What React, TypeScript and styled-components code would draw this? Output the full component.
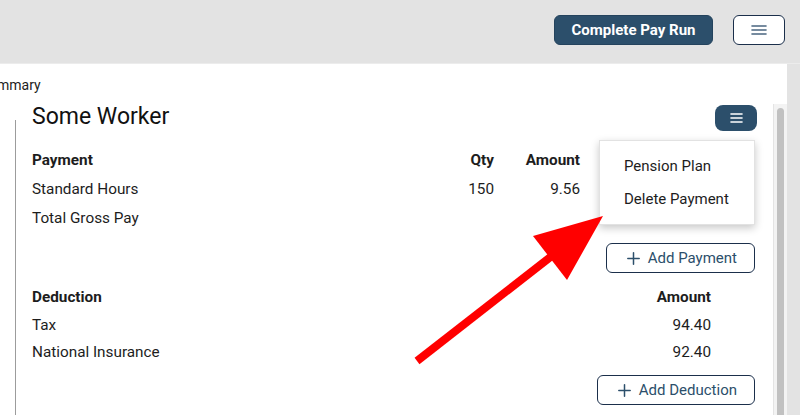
import React from "react";
import styled, { createGlobalStyle } from "styled-components";

const Global = createGlobalStyle`
  html, body { margin: 0; padding: 0; overflow: hidden; background: #e3e3e3; }
  body { font-family: Roboto, "Liberation Sans", Arial, sans-serif; color: #1d1d1d; }
  * { box-sizing: border-box; }
`;

const Page = styled.div`
  position: relative;
  width: 800px;
  height: 415px;
  overflow: hidden;
  display: flex;
  flex-direction: column;
  background: #e3e3e3;
`;

const TopBar = styled.header`
  height: 64px;
  flex: none;
  display: flex;
  align-items: flex-start;
  justify-content: flex-end;
  gap: 20px;
  padding: 15px 15px 0 0;
  border-bottom: 1px solid #ececec;
`;

const PrimaryButton = styled.button`
  height: 30px;
  width: 159px;
  padding: 0;
  border: 1px solid #24435d;
  border-radius: 6px;
  background: #2c4f6b;
  color: #fff;
  font-family: inherit;
  font-size: 15px;
  font-weight: 700;
  white-space: nowrap;
  display: flex;
  align-items: center;
  justify-content: center;
`;

const OutlineButton = styled.button<{ $w?: number }>`
  height: 30px;
  width: ${(p) => (p.$w ? `${p.$w}px` : "auto")};
  padding: ${(p) => (p.$w ? "0" : "0 17px 0 20px")};
  border: 1.5px solid #1b2f4b;
  border-radius: 6px;
  background: #fff;
  color: #2c4f6b;
  font-family: inherit;
  font-size: 15px;
  white-space: nowrap;
  display: flex;
  align-items: center;
  justify-content: center;
  gap: 8px;
`;

const IconButton = styled.button`
  width: 42px;
  height: 26px;
  border: none;
  border-radius: 8px;
  background: #2c4f6b;
  display: flex;
  align-items: center;
  justify-content: center;
  padding: 0;
`;

const Body = styled.div`
  flex: 1;
  min-height: 0;
  display: flex;
`;

const Panel = styled.main`
  flex: 1;
  margin-right: 13px;
  background: #fff;
  display: flex;
  flex-direction: column;
  min-height: 0;
`;

const Summary = styled.div`
  height: 40px;
  flex: none;
  display: flex;
  align-items: center;
  margin-left: -19px;
  padding-top: 1px;
  font-size: 14px;
  color: #1d1d1d;
`;

const ScrollArea = styled.div`
  flex: 1;
  min-height: 0;
  display: flex;
`;

const ScrollView = styled.div`
  flex: 1;
  min-width: 0;
  overflow: hidden;
`;

const ScrollTrack = styled.div`
  flex: none;
  width: 14px;
  background: #f3f3f3;
  border-left: 1px solid #e4e4e4;
  display: flex;
  padding: 4px 3px 0 3px;
`;

const ScrollThumb = styled.div`
  flex: 1;
  height: 360px;
  border-radius: 4px;
  background: #c1c1c1;
`;

const WorkerRow = styled.div`
  display: flex;
  min-height: 420px;
`;

const Rail = styled.div`
  flex: none;
  width: 1px;
  margin: 16px 0 0 15px;
  background: #9c9c9c;
`;

const Content = styled.section`
  position: relative;
  flex: 1;
  margin: 0 16px 0 16px;
  display: flex;
  flex-direction: column;
`;

const TitleRow = styled.div`
  height: 27px;
  display: flex;
  align-items: center;
  justify-content: space-between;
`;

const Title = styled.h2`
  margin: -1px 0 0;
  font-size: 23px;
  font-weight: 400;
  color: #111;
  line-height: 26px;
`;

const Table = styled.div<{ $cols: string; $mt: number }>`
  display: grid;
  grid-template-columns: ${(p) => p.$cols};
  margin-top: ${(p) => p.$mt}px;
  font-size: 15.3px;
`;

const Cell = styled.div<{ $h: number; $bold?: boolean; $right?: boolean }>`
  height: ${(p) => p.$h}px;
  display: flex;
  align-items: center;
  justify-content: ${(p) => (p.$right ? "flex-end" : "flex-start")};
  font-weight: ${(p) => (p.$bold ? 700 : 400)};
  color: #1d1d1d;
  white-space: nowrap;
`;

const ButtonRow = styled.div<{ $mt: number }>`
  display: flex;
  justify-content: flex-end;
  margin-top: ${(p) => p.$mt}px;
  padding-right: 2px;
`;

const Menu = styled.div`
  position: absolute;
  top: 36px;
  right: 2px;
  width: 156px;
  padding: 8px 0 9px;
  background: #fff;
  border: 1px solid #e2e2e2;
  box-shadow: 0 3px 8px rgba(0, 0, 0, 0.22);
  z-index: 2;
`;

const MenuItem = styled.div`
  height: 33px;
  display: flex;
  align-items: center;
  padding-left: 24px;
  font-size: 15px;
  color: #1d1d1d;
`;

const Overlay = styled.svg`
  position: absolute;
  left: 0;
  top: 0;
  pointer-events: none;
  z-index: 5;
`;

const Hamburger = ({ color, w }: { color: string; w: number }) => (
  <svg width={w} height="12" viewBox={`0 0 ${w} 12`}>
    <g stroke={color} strokeWidth="1.6" strokeLinecap="round">
      <line x1="1" y1="2" x2={w - 1} y2="2" />
      <line x1="1" y1="6" x2={w - 1} y2="6" />
      <line x1="1" y1="10" x2={w - 1} y2="10" />
    </g>
  </svg>
);

const PlusIcon = () => (
  <svg width="13" height="13" viewBox="0 0 13 13">
    <g stroke="#2c4f6b" strokeWidth="1.5" strokeLinecap="round">
      <line x1="6.5" y1="0.8" x2="6.5" y2="12.2" />
      <line x1="0.8" y1="6.5" x2="12.2" y2="6.5" />
    </g>
  </svg>
);

const payCols = "1fr 60px 86px 100px 77px";
const dedCols = "1fr 100px 46px";

export default function App() {
  return (
    <>
      <Global />
      <Page>
        <TopBar>
          <PrimaryButton>Complete Pay Run</PrimaryButton>
          <OutlineButton $w={52}>
            <Hamburger color="#4a6680" w={16} />
          </OutlineButton>
        </TopBar>
        <Body>
          <Panel>
            <Summary>Summary</Summary>
            <ScrollArea>
              <ScrollView>
                <WorkerRow>
                  <Rail />
                  <Content>
                    <TitleRow>
                      <Title>Some Worker</Title>
                      <IconButton>
                        <Hamburger color="#ffffff" w={13} />
                      </IconButton>
                    </TitleRow>

                    <Table $cols={payCols} $mt={15}>
                      <Cell $h={28} $bold>Payment</Cell>
                      <Cell $h={28} $bold $right>Qty</Cell>
                      <Cell $h={28} $bold $right>Amount</Cell>
                      <Cell $h={28} $bold $right>Total</Cell>
                      <Cell $h={28} />
                      <Cell $h={29}>Standard Hours</Cell>
                      <Cell $h={29} $right>150</Cell>
                      <Cell $h={29} $right>9.56</Cell>
                      <Cell $h={29} $right>1,434.00</Cell>
                      <Cell $h={29} />
                      <Cell $h={29}>Total Gross Pay</Cell>
                      <Cell $h={29} />
                      <Cell $h={29} />
                      <Cell $h={29} $right>1,434.00</Cell>
                      <Cell $h={29} />
                    </Table>

                    <ButtonRow $mt={11}>
                      <OutlineButton>
                        <PlusIcon />
                        Add Payment
                      </OutlineButton>
                    </ButtonRow>

                    <Table $cols={dedCols} $mt={10}>
                      <Cell $h={28} $bold>Deduction</Cell>
                      <Cell $h={28} $bold $right>Amount</Cell>
                      <Cell $h={28} />
                      <Cell $h={27}>Tax</Cell>
                      <Cell $h={27} $right>94.40</Cell>
                      <Cell $h={27} />
                      <Cell $h={27}>National Insurance</Cell>
                      <Cell $h={27} $right>92.40</Cell>
                      <Cell $h={27} />
                    </Table>

                    <ButtonRow $mt={10}>
                      <OutlineButton>
                        <PlusIcon />
                        Add Deduction
                      </OutlineButton>
                    </ButtonRow>

                    <Menu>
                      <MenuItem>Pension Plan</MenuItem>
                      <MenuItem>Delete Payment</MenuItem>
                    </Menu>
                  </Content>
                </WorkerRow>
              </ScrollView>
              <ScrollTrack>
                <ScrollThumb />
              </ScrollTrack>
            </ScrollArea>
          </Panel>
        </Body>
        <Overlay width="800" height="415" viewBox="0 0 800 415">
          <line x1="417" y1="361" x2="562" y2="248" stroke="#ff0000" strokeWidth="8" />
          <polygon points="603,216 533,236 567,280" fill="#ff0000" />
        </Overlay>
      </Page>
    </>
  );
}
